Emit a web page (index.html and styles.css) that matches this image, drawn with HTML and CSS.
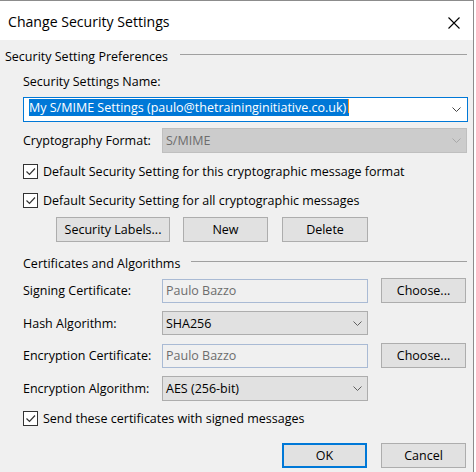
FILE: index.html
```html
<!DOCTYPE html>
<html>
<head>
<meta charset="utf-8">
<title>Change Security Settings</title>
<link rel="stylesheet" href="styles.css">
</head>
<body>
<div class="window">
  <div class="titlebar">
    <span class="title">Change Security Settings</span>
    <svg class="close" width="12" height="12" viewBox="0 0 12 12"><path d="M0.5 0.5 L11.5 11.5 M11.5 0.5 L0.5 11.5" stroke="#000" stroke-width="1.1" fill="none"/></svg>
  </div>
  <div class="client">
    <div class="group-head outer"><span class="gtext">Security Setting Preferences</span><span class="rule r1"></span></div>

    <div class="indent">
      <div class="plain-label">Security Settings Name:</div>
    </div>
    <div class="indent combo focused name-combo">
      <span class="combo-text"><span class="sel">My S/MIME Settings (paulo@thetraininginitiative.co.uk)</span><span class="caret"></span></span>
      <svg class="chev" width="9" height="5" viewBox="0 0 9 5"><path d="M0.5 0.5 L4.5 4.5 L8.5 0.5" stroke="#444" stroke-width="1" fill="none"/></svg>
    </div>

    <div class="indent fmt-row">
      <span class="lbl">Cryptography Format:</span>
      <div class="combo disabled grow">
        <span class="combo-text">S/MIME</span>
        <svg class="chev" width="9" height="5" viewBox="0 0 9 5"><path d="M0.5 0.5 L4.5 4.5 L8.5 0.5" stroke="#a8a8a8" stroke-width="1" fill="none"/></svg>
      </div>
    </div>

    <label class="indent check c1"><span class="box"><svg width="13" height="13" viewBox="0 0 13 13"><path d="M2.5 6.5 L5.5 9.5 L11 3.5" stroke="#333" stroke-width="1.2" fill="none"/></svg></span>Default Security Setting for this cryptographic message format</label>
    <label class="indent check c2"><span class="box"><svg width="13" height="13" viewBox="0 0 13 13"><path d="M2.5 6.5 L5.5 9.5 L11 3.5" stroke="#333" stroke-width="1.2" fill="none"/></svg></span>Default Security Setting for all cryptographic messages</label>

    <div class="indent btn-row">
      <button class="btn b-labels">Security Labels...</button>
      <button class="btn b-new">New</button>
      <button class="btn b-delete">Delete</button>
    </div>

    <div class="indent group-head inner"><span class="gtext">Certificates and Algorithms</span><span class="rule r2"></span></div>

    <div class="indent form-row sign-row">
      <span class="lbl">Signing Certificate:</span>
      <div class="field">Paulo Bazzo</div>
      <button class="btn choose">Choose...</button>
    </div>
    <div class="indent form-row hash-row">
      <span class="lbl">Hash Algorithm:</span>
      <div class="combo list">
        <span class="combo-text">SHA256</span>
        <svg class="chev" width="9" height="5" viewBox="0 0 9 5"><path d="M0.5 0.5 L4.5 4.5 L8.5 0.5" stroke="#606060" stroke-width="1" fill="none"/></svg>
      </div>
    </div>
    <div class="indent form-row enc-row">
      <span class="lbl">Encryption Certificate:</span>
      <div class="field">Paulo Bazzo</div>
      <button class="btn choose">Choose...</button>
    </div>
    <div class="indent form-row alg-row">
      <span class="lbl">Encryption Algorithm:</span>
      <div class="combo list">
        <span class="combo-text">AES (256-bit)</span>
        <svg class="chev" width="9" height="5" viewBox="0 0 9 5"><path d="M0.5 0.5 L4.5 4.5 L8.5 0.5" stroke="#606060" stroke-width="1" fill="none"/></svg>
      </div>
    </div>

    <label class="indent check c3"><span class="box"><svg width="13" height="13" viewBox="0 0 13 13"><path d="M2.5 6.5 L5.5 9.5 L11 3.5" stroke="#333" stroke-width="1.2" fill="none"/></svg></span>Send these certificates with signed messages</label>

    <div class="footer">
      <button class="btn ok">OK</button>
      <button class="btn cancel">Cancel</button>
    </div>
  </div>
</div>
</body>
</html>
```
FILE: styles.css
```css
html, body {
  margin: 0;
  padding: 0;
  background: #ffffff;
}
body {
  width: 476px;
  height: 472px;
  overflow: hidden;
  font-family: "Open Sans", "Noto Sans", sans-serif;
  font-size: 12.5px;
  color: #000;
}
.window {
  width: 473px;
  height: 471px;
  border-top: 1px solid #8c8c8c;
  border-right: 1px solid #8c8c8c;
  display: flex;
  flex-direction: column;
}
.titlebar {
  height: 39px;
  flex: none;
  background: #ffffff;
  display: flex;
  align-items: flex-start;
  padding-left: 8px;
  box-sizing: border-box;
}
.title {
  font-size: 14.1px;
  line-height: 36px;
  margin-top: 3px;
}
.close {
  margin-left: auto;
  margin-right: 13px;
  margin-top: 16px;
}
.client {
  flex: 1;
  background: #f0f0f0;
  display: flex;
  flex-direction: column;
  padding: 0 5px;
}
.indent {
  margin-left: 18px;
}
.group-head {
  display: flex;
  align-items: flex-start;
  height: 22px;
  line-height: 22px;
  flex: none;
}
.group-head.outer { margin-top: 6px; }
.group-head.inner { margin-top: 11px; }
.rule {
  flex: 1;
  height: 0;
  border-top: 1px solid #a0a0a0;
  margin-top: 8px;
  margin-right: 1px;
}
.r1 { margin-left: 12px; }
.r2 { margin-left: 11px; }

.plain-label {
  margin-top: 5px;
  line-height: 17px;
  height: 17px;
}

.combo {
  box-sizing: border-box;
  height: 25px;
  display: flex;
  align-items: center;
  border: 1px solid #adadad;
  background: #e1e1e1;
  padding-left: 3px;
  padding-right: 5px;
  white-space: nowrap;
}
.combo .chev { margin-left: auto; flex: none; }
.combo-text { line-height: 17px; }

.name-combo {
  margin-top: 7px;
  border-color: #0078d7;
  background: #ffffff;
  padding-left: 5px;
  padding-right: 6px;
  align-items: flex-start;
}
.name-combo .combo-text {
  margin-top: 1px;
  display: flex;
}
.name-combo .chev { margin-top: 9px; }
.sel {
  background: #0078d7;
  color: #ffffff;
  height: 17px;
  line-height: 17px;
  padding-right: 3px;
}
.caret {
  width: 1px;
  height: 14px;
  background: #f7941d;
  margin-left: -1px;
}

.fmt-row {
  margin-top: 6px;
  display: flex;
  align-items: center;
  height: 25px;
}
.lbl {
  width: 139px;
  flex: none;
  line-height: 17px;
}
.grow { flex: 1; height: 25px; }
.combo.disabled {
  background: #cccccc;
  border-color: #bfbfbf;
  color: #6d6d6d;
  margin-right: 1px;
}

.check {
  display: flex;
  align-items: center;
  height: 15px;
  line-height: 17px;
}
.c1 { margin-top: 11px; }
.c2 { margin-top: 14px; }
.c3 { margin-top: 10px; }
.box {
  box-sizing: border-box;
  width: 15px;
  height: 15px;
  border: 1px solid #333333;
  background: #ffffff;
  margin-right: 5px;
  flex: none;
  display: flex;
}

.btn {
  box-sizing: border-box;
  height: 25px;
  border: 1px solid #adadad;
  background: #e1e1e1;
  font-family: inherit;
  font-size: 12.5px;
  color: #000;
  padding: 0;
  margin: 0;
  line-height: 17px;
}
.btn-row {
  margin-top: 9px;
  display: flex;
  height: 25px;
  padding-left: 33px;
}
.b-labels { width: 114px; }
.b-new { width: 85px; margin-left: 13px; }
.b-delete { width: 86px; margin-left: 14px; }

.form-row {
  display: grid;
  grid-template-columns: 139px 206px 13px 85px;
  align-items: center;
  height: 25px;
}
.form-row .choose { grid-column: 4; }
.sign-row { margin-top: 3px; }
.hash-row { margin-top: 8px; height: 24px; }
.enc-row { margin-top: 8px; }
.alg-row { margin-top: 8px; }
.hash-row .combo { height: 24px; }
.alg-row .combo { height: 25px; }
.field {
  box-sizing: border-box;
  height: 24px;
  border: 1px solid #a9bad4;
  background: #f0f0f0;
  color: #6d6d6d;
  padding-left: 3px;
  line-height: 22px;
  align-self: end;
}
.choose { width: 85px; }

.footer {
  margin-top: 17px;
  display: flex;
  justify-content: flex-end;
  height: 25px;
  padding-right: 2px;
}
.ok {
  width: 85px;
  border: 2px solid #0078d7;
}
.cancel {
  width: 85px;
  margin-left: 14px;
}
```
